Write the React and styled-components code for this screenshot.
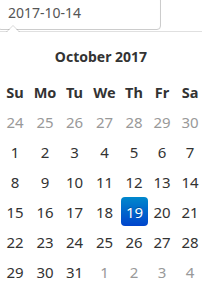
import React from 'react';
import styled, { createGlobalStyle } from 'styled-components';

const Global = createGlobalStyle`
  html, body {
    margin: 0;
    padding: 0;
    background: #fff;
    overflow: hidden;
  }
  body {
    font-family: "Noto Sans", "Open Sans", sans-serif;
  }
`;

const Page = styled.div`
  width: 202px;
  height: 286px;
  position: relative;
  overflow: hidden;
`;

const Input = styled.div`
  box-sizing: border-box;
  width: 164px;
  height: 35px;
  margin: -5px 0 0 -3px;
  padding: 0 0 0 10px;
  display: flex;
  align-items: center;
  border: 1px solid #ccc;
  border-radius: 4px;
  box-shadow: inset 0 1px 1px rgba(0, 0, 0, 0.075);
  font-size: 14px;
  color: #555;
`;

const Dropdown = styled.div`
  position: absolute;
  top: 31px;
  left: 0;
  width: 204px;
  padding: 9px 0 0;
  border-top: 1px solid rgba(0, 0, 0, 0.12);
  background: #fff;

  &::before {
    content: '';
    position: absolute;
    top: -7px;
    left: 6px;
    border-left: 7px solid transparent;
    border-right: 7px solid transparent;
    border-bottom: 7px solid rgba(0, 0, 0, 0.15);
  }
  &::after {
    content: '';
    position: absolute;
    top: -6px;
    left: 7px;
    border-left: 6px solid transparent;
    border-right: 6px solid transparent;
    border-bottom: 6px solid #fff;
  }
`;

const Title = styled.div`
  height: 32px;
  line-height: 32px;
  text-align: center;
  font-weight: 700;
  font-size: 14px;
  color: #333;
  margin-bottom: 4px;
  padding-right: 2px;
`;

const Grid = styled.div`
  display: grid;
  grid-template-columns: 30px 30px 29px 31px 28px 28px 28px;
  grid-auto-rows: 30px;
`;

const Head = styled.div`
  display: flex;
  align-items: center;
  justify-content: center;
  font-weight: 700;
  font-size: 14.5px;
  color: #333;
`;

const Day = styled.div`
  display: flex;
  align-items: center;
  justify-content: center;
  font-size: 15px;
  color: ${(p) => (p.muted ? '#999' : '#333')};
  border-radius: 4px;
  ${(p) =>
    p.active &&
    `
    margin: 0 0 1px 1px;
    color: #fff;
    background: linear-gradient(to bottom, #0088cc, #0044cc);
    text-shadow: 0 -1px 0 rgba(0,0,0,.25);
  `}
`;

const heads = ['Su', 'Mo', 'Tu', 'We', 'Th', 'Fr', 'Sa'];

const days = [];
for (let d = 24; d <= 30; d += 1) days.push({ n: d, muted: true });
for (let d = 1; d <= 31; d += 1) days.push({ n: d, active: d === 19 });
for (let d = 1; d <= 4; d += 1) days.push({ n: d, muted: true });

export default function App() {
  return (
    <Page>
      <Global />
      <Input>2017-10-14</Input>
      <Dropdown>
        <Title>October 2017</Title>
        <Grid>
          {heads.map((h) => (
            <Head key={h}>{h}</Head>
          ))}
          {days.map((d, i) => (
            <Day key={i} muted={d.muted} active={d.active}>
              {d.n}
            </Day>
          ))}
        </Grid>
      </Dropdown>
    </Page>
  );
}
